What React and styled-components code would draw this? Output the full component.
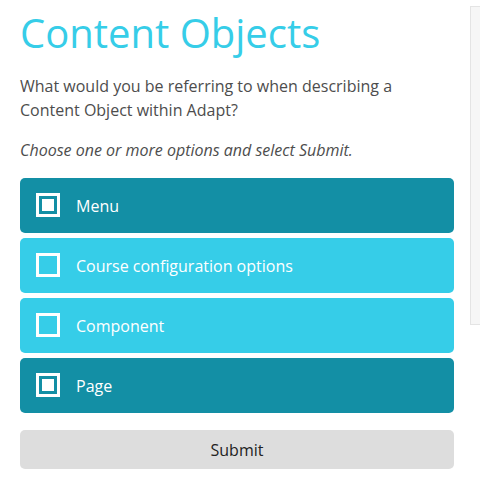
import React, { useState } from "react";
import styled, { createGlobalStyle } from "styled-components";

const GlobalStyle = createGlobalStyle`
  html, body {
    margin: 0;
    padding: 0;
    background: #fff;
    overflow: hidden;
  }
  body {
    font-family: "Open Sans", "Liberation Sans", sans-serif;
  }
`;

const options = [
  { id: 1, label: "Menu", checked: true },
  { id: 2, label: "Course configuration options", checked: false },
  { id: 3, label: "Component", checked: false },
  { id: 4, label: "Page", checked: true },
];

// single option row in the question
const OptionItem = ({ option, onToggle }) => (
  <Option selected={option.checked} onClick={() => onToggle(option.id)}>
    <CheckBox>{option.checked && <CheckMark />}</CheckBox>
    <OptionLabel>{option.label}</OptionLabel>
  </Option>
);

const App = () => {
  const [items, setItems] = useState(options);

  const handleToggle = (id) => {
    setItems(
      items.map((item) =>
        item.id === id ? { ...item, checked: !item.checked } : item
      )
    );
  };

  return (
    <Page>
      <GlobalStyle />
      <Main>
        <Title>Content Objects</Title>
        <Body>
          What would you be referring to when describing a Content Object
          within Adapt?
        </Body>
        <Instruction>Choose one or more options and select Submit.</Instruction>
        <OptionList>
          {items.map((item) => (
            <OptionItem key={item.id} option={item} onToggle={handleToggle} />
          ))}
        </OptionList>
        <SubmitButton>Submit</SubmitButton>
      </Main>
      <SidePanel />
    </Page>
  );
};

export default App;

const Page = styled.div`
  display: flex;
  align-items: flex-start;
  width: 480px;
`;

const Main = styled.div`
  flex-shrink: 0;
  width: 434px;
  margin-left: 20px;
  padding-top: 8px;
`;

const Title = styled.h1`
  margin: 0 0 16px;
  font-size: 40px;
  font-weight: 400;
  line-height: 50px;
  color: #36cde8;
`;

const Body = styled.p`
  margin: 0 0 16px;
  font-size: 16px;
  line-height: 24px;
  color: #4d4d4d;
`;

const Instruction = styled(Body)`
  font-style: italic;
  margin-bottom: 16px;
`;

const OptionList = styled.div`
  display: flex;
  flex-direction: column;
  gap: 5px;
`;

const Option = styled.div`
  display: flex;
  align-items: center;
  gap: 16px;
  height: 55px;
  padding: 0 16px;
  box-sizing: border-box;
  border-radius: 5px;
  background-color: ${({ selected }) => (selected ? "#138fa5" : "#36cde8")};
  cursor: pointer;
`;

const CheckBox = styled.span`
  display: flex;
  align-items: center;
  justify-content: center;
  width: 24px;
  height: 24px;
  box-sizing: border-box;
  border: 3px solid #fff;
  margin-top: -2px;
`;

const CheckMark = styled.span`
  width: 12px;
  height: 12px;
  background: #fff;
`;

const OptionLabel = styled.span`
  font-size: 16px;
  line-height: 24px;
  color: #fff;
`;

const SubmitButton = styled.button`
  display: block;
  width: 100%;
  height: 39px;
  margin-top: 17px;
  border: none;
  border-radius: 5px;
  background: #dddddd;
  color: #222;
  font-family: "Open Sans", "Liberation Sans", sans-serif;
  font-size: 16px;
  cursor: pointer;
`;

const SidePanel = styled.div`
  flex-shrink: 0;
  width: 24px;
  height: 319px;
  margin: 6px 0 0 16px;
  box-sizing: border-box;
  border: 1px solid #e4e4e4;
  background: #f6f6f6;
`;
